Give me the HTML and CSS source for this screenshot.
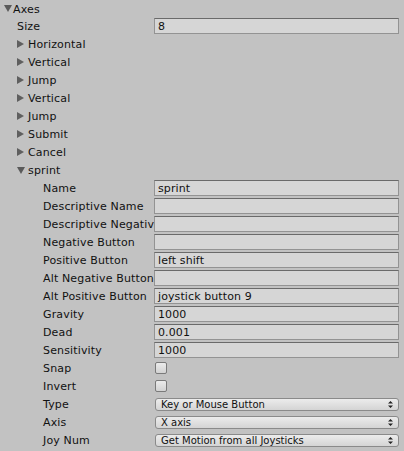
FILE: index.html
```html
<!DOCTYPE html>
<html>
<head>
<meta charset="utf-8">
<link rel="stylesheet" href="styles.css">
</head>
<body>
<div class="panel">
  <div class="row first"><span class="label d0"><span class="tri down"></span>Axes</span></div>
  <div class="row"><span class="label d1">Size</span><span class="field">8</span></div>
  <div class="row"><span class="label d1"><span class="tri right"></span>Horizontal</span></div>
  <div class="row"><span class="label d1"><span class="tri right"></span>Vertical</span></div>
  <div class="row"><span class="label d1"><span class="tri right"></span>Jump</span></div>
  <div class="row"><span class="label d1"><span class="tri right"></span>Vertical</span></div>
  <div class="row"><span class="label d1"><span class="tri right"></span>Jump</span></div>
  <div class="row"><span class="label d1"><span class="tri right"></span>Submit</span></div>
  <div class="row"><span class="label d1"><span class="tri right"></span>Cancel</span></div>
  <div class="row"><span class="label d1"><span class="tri down"></span>sprint</span></div>
  <div class="row"><span class="label d2">Name</span><span class="field">sprint</span></div>
  <div class="row"><span class="label d2">Descriptive Name</span><span class="field"></span></div>
  <div class="row"><span class="label d2">Descriptive Negativ</span><span class="field"></span></div>
  <div class="row"><span class="label d2">Negative Button</span><span class="field"></span></div>
  <div class="row"><span class="label d2">Positive Button</span><span class="field">left shift</span></div>
  <div class="row"><span class="label d2">Alt Negative Button</span><span class="field"></span></div>
  <div class="row"><span class="label d2">Alt Positive Button</span><span class="field">joystick button 9</span></div>
  <div class="row"><span class="label d2">Gravity</span><span class="field">1000</span></div>
  <div class="row"><span class="label d2">Dead</span><span class="field">0.001</span></div>
  <div class="row"><span class="label d2">Sensitivity</span><span class="field">1000</span></div>
  <div class="row"><span class="label d2">Snap</span><span class="check"></span></div>
  <div class="row"><span class="label d2">Invert</span><span class="check"></span></div>
  <div class="row"><span class="label d2">Type</span><span class="drop"><span class="dtext">Key or Mouse Button</span><svg class="arr" width="5" height="7" viewBox="0 0 5 7"><path d="M2.5 0 L5 2.5 L0 2.5 Z M2.5 7 L5 4.5 L0 4.5 Z" fill="#222"/></svg></span></div>
  <div class="row"><span class="label d2">Axis</span><span class="drop"><span class="dtext">X axis</span><svg class="arr" width="5" height="7" viewBox="0 0 5 7"><path d="M2.5 0 L5 2.5 L0 2.5 Z M2.5 7 L5 4.5 L0 4.5 Z" fill="#222"/></svg></span></div>
  <div class="row"><span class="label d2">Joy Num</span><span class="drop"><span class="dtext">Get Motion from all Joysticks</span><svg class="arr" width="5" height="7" viewBox="0 0 5 7"><path d="M2.5 0 L5 2.5 L0 2.5 Z M2.5 7 L5 4.5 L0 4.5 Z" fill="#222"/></svg></span></div>
</div>
</body>
</html>
```
FILE: styles.css
```css
html, body {
  margin: 0;
  padding: 0;
  background: #c2c2c2;
}
body {
  width: 404px;
  height: 451px;
  overflow: hidden;
  font-family: "DejaVu Sans", sans-serif;
  font-size: 11px;
  color: #111;
}
.panel {
  display: flex;
  flex-direction: column;
}
.row {
  height: 18px;
  display: flex;
  align-items: center;
  padding-right: 5px;
}
.row.first {
  height: 17px;
}
.label {
  width: 154px;
  height: 18px;
  flex: none;
  box-sizing: border-box;
  white-space: nowrap;
  overflow: hidden;
  display: flex;
  align-items: center;
  padding-top: 2px;
  line-height: 16px;
  letter-spacing: 0.15px;
}
.d0 { padding-left: 4px; }
.d1 { padding-left: 17px; }
.d2 { padding-left: 43px; }
.tri {
  display: inline-block;
  width: 0;
  height: 0;
  margin-top: -2px;
}
.tri.down {
  border-left: 4px solid transparent;
  border-right: 4px solid transparent;
  border-top: 7px solid #5a5a5a;
  margin-right: 1px;
}
.d1 .tri.down { margin-right: 3px; }
.tri.right {
  border-top: 4px solid transparent;
  border-bottom: 4px solid transparent;
  border-left: 7px solid #5f5f5f;
  margin-right: 4px;
}
.field {
  flex: 1;
  height: 16px;
  box-sizing: border-box;
  background: #d6d6d6;
  border: 1px solid #939393;
  border-top-color: #6a6a6a;
  padding-left: 3px;
  padding-top: 1px;
  line-height: 13px;
  white-space: nowrap;
  overflow: hidden;
  letter-spacing: 0.1px;
}
.check {
  width: 12px;
  height: 12px;
  box-sizing: border-box;
  margin-left: 1px;
  border: 1px solid #7a7a7a;
  border-radius: 2px;
  background: linear-gradient(#ebebeb, #d2d2d2);
}
.drop {
  flex: 1;
  margin-left: 1px;
  height: 13px;
  box-sizing: border-box;
  border: 1px solid #8a8a8a;
  border-radius: 3px;
  background: linear-gradient(#ececec, #d4d4d4);
  display: flex;
  align-items: center;
  padding-left: 5px;
  padding-right: 5px;
  font-size: 10px;
}
.dtext {
  flex: 1;
  line-height: 11px;
  white-space: nowrap;
}
.arr {
  flex: none;
}
```
